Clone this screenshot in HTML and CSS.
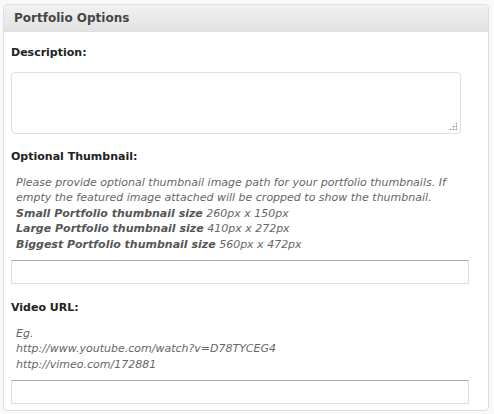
FILE: index.html
```html
<!DOCTYPE html>
<html>
<head>
<meta charset="utf-8">
<link rel="stylesheet" href="styles.css">
</head>
<body>
<div class="postbox">
  <h3 class="hndle">Portfolio Options</h3>
  <div class="inside">
    <div class="field">
      <label class="label">Description:</label>
      <div class="textarea-wrap">
        <textarea class="textarea"></textarea>
        <span class="grip"></span>
      </div>
    </div>
    <div class="field">
      <label class="label">Optional Thumbnail:</label>
      <p class="desc">Please provide optional thumbnail image path for your portfolio thumbnails. If empty the featured image attached will be cropped to show the thumbnail.<br>
      <b>Small Portfolio thumbnail size</b> 260px x 150px<br>
      <b>Large Portfolio thumbnail size</b> 410px x 272px<br>
      <b>Biggest Portfolio thumbnail size</b> 560px x 472px</p>
      <input class="text" type="text">
    </div>
    <div class="field">
      <label class="label">Video URL:</label>
      <p class="desc">Eg.<br>http://www.youtube.com/watch?v=D78TYCEG4<br>http://vimeo.com/172881</p>
      <input class="text" type="text">
    </div>
  </div>
</div>
</body>
</html>
```
FILE: styles.css
```css
html, body {
  margin: 0;
  padding: 0;
  background: #f9f9f9;
}
body {
  padding: 4px 4px 0 3px;
  font-family: "DejaVu Sans", Verdana, sans-serif;
  font-size: 11px;
  color: #333;
}
.postbox {
  width: 486px;
  height: 407px;
  box-sizing: border-box;
  border: 1px solid #dfdfdf;
  border-radius: 4px;
  background: #fff;
  overflow: hidden;
}
.hndle {
  margin: 0;
  height: 27px;
  box-sizing: border-box;
  padding: 0 0 0 10px;
  line-height: 26px;
  font-size: 12px;
  font-weight: bold;
  color: #464646;
  background: linear-gradient(to bottom, #f1f1f1, #e3e3e3);
  border-bottom: 1px solid #dfdfdf;
}
.inside {
  padding: 14px 20px 0 7px;
}
.field {
  display: flex;
  flex-direction: column;
  align-items: flex-start;
}
.label {
  font-weight: bold;
  color: #222;
  line-height: 14px;
  height: 14px;
}
.textarea-wrap {
  position: relative;
  margin-top: 12px;
  margin-bottom: 16px;
  width: 450px;
  height: 62px;
}
.textarea {
  display: block;
  width: 450px;
  height: 62px;
  box-sizing: border-box;
  border: 1px solid #dfdfdf;
  border-radius: 4px;
  resize: none;
  margin: 0;
  padding: 2px;
  background: #fff;
}
.grip {
  position: absolute;
  right: 4px;
  bottom: 4px;
  width: 8px;
  height: 8px;
  background:
    radial-gradient(circle, #999 0.9px, transparent 1.1px) 0 0 / 3px 3px;
  clip-path: polygon(100% 0, 100% 100%, 0 100%);
}
.desc {
  margin: 11px 0 0 5px;
  font-style: italic;
  color: #666;
  line-height: 15.4px;
}
.desc b {
  color: #555;
}
.text {
  display: block;
  margin: 8px 0 17px 0;
  width: 458px;
  height: 24px;
  box-sizing: border-box;
  border: 1px solid #dfdfdf;
  border-top-color: #aaa;
  border-radius: 0;
  padding: 2px;
  background: #fff;
  font: inherit;
}
```
